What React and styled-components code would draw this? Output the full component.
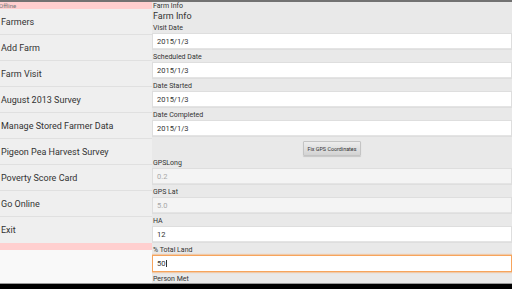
import React from "react";
import styled, { createGlobalStyle } from "styled-components";

const GlobalStyle = createGlobalStyle`
  html, body {
    margin: 0;
    padding: 0;
    background: #000;
  }
  body {
    font-family: Roboto, "Liberation Sans", sans-serif;
  }
`;

const Screen = styled.div`
  width: 512px;
  height: 289px;
  display: flex;
  flex-direction: column;
  overflow: hidden;
  background: #000;
`;

const StatusBar = styled.div`
  height: 2px;
  background: #727272;
`;

const Main = styled.div`
  height: 281px;
  display: flex;
`;

const NavBar = styled.div`
  height: 1px;
  background: #9a9a9a;
`;

const Sidebar = styled.div`
  width: 152px;
  display: flex;
  flex-direction: column;
  background: #f9f9f9;
`;

const Banner = styled.div`
  height: 7px;
  background: #ffcfcf;
  font-size: 6px;
  line-height: 7px;
  color: #777;
  text-indent: ${(p) => p.indent || 0}px;
  overflow: hidden;
  white-space: nowrap;
`;

const Menu = styled.ul`
  list-style: none;
  margin: 0;
  padding: 0;
  background: #efefef;
`;

const MenuItem = styled.li`
  height: 26px;
  box-sizing: border-box;
  display: flex;
  align-items: center;
  padding-left: 1px;
  font-size: 9px;
  color: #333;
  border-bottom: ${(p) => (p.last ? "none" : "1px solid #e0e0e0")};
  white-space: nowrap;
`;

const Form = styled.div`
  flex: 1;
  background: #e9e9e9;
  display: flex;
  flex-direction: column;
  overflow: hidden;
  color: #333;
`;

const SmallTitle = styled.div`
  height: 9px;
  font-size: 7px;
  line-height: 9px;
  padding-left: 1px;
`;

const Title = styled.div`
  height: 10px;
  font-size: 9px;
  line-height: 10px;
  padding-left: 1px;
`;

const Field = styled.div`
  margin-top: 3px;
  display: flex;
  flex-direction: column;
`;

const Label = styled.div`
  height: 9px;
  font-size: 7px;
  line-height: 9px;
  padding-left: 1px;
  white-space: nowrap;
`;

const Input = styled.div`
  height: 17px;
  box-sizing: border-box;
  display: flex;
  align-items: center;
  padding-left: 4px;
  font-size: 7.5px;
  background: ${(p) => (p.disabled ? "#f4f4f4" : "#fff")};
  color: ${(p) => (p.disabled ? "#a8a8a8" : "#333")};
  border: 1px solid ${(p) => (p.focused ? "#f7a45c" : "#dedede")};
  box-shadow: ${(p) =>
    p.focused ? "0 0 1px 1px rgba(247,164,92,0.45)" : "inset 0 -1px 0 #e4e4e4"};
`;

const Caret = styled.span`
  display: inline-block;
  width: 1px;
  height: 7px;
  background: #333;
  margin-left: 0.5px;
`;

const ButtonRow = styled.div`
  margin-top: 4px;
  display: flex;
  justify-content: center;
`;

const Button = styled.button`
  width: 58px;
  height: 15px;
  padding: 0;
  font-family: Roboto, "Liberation Sans", sans-serif;
  font-size: 5.4px;
  color: #333;
  border: 1px solid #c4c4c4;
  border-radius: 1px;
  background: linear-gradient(#ededed, #d3d3d3);
  box-shadow: 0 1px 1px rgba(0, 0, 0, 0.15);
  white-space: nowrap;
`;

const BlackBar = styled.div`
  flex: 1;
  background: #000;
`;

const menu = [
  "Farmers",
  "Add Farm",
  "Farm Visit",
  "August 2013 Survey",
  "Manage Stored Farmer Data",
  "Pigeon Pea Harvest Survey",
  "Poverty Score Card",
  "Go Online",
  "Exit",
];

const dates = ["Visit Date", "Scheduled Date", "Date Started", "Date Completed"];

const App = () => {
  return (
    <Screen>
      <GlobalStyle />
      <StatusBar />
      <Main>
        <Sidebar>
          <Banner indent={-1}>Offline</Banner>
          <Menu>
            {menu.map((m, i) => (
              <MenuItem key={m} last={i === menu.length - 1}>
                {m}
              </MenuItem>
            ))}
          </Menu>
          <Banner />
        </Sidebar>

        <Form>
          <SmallTitle>Farm Info</SmallTitle>
          <Title>Farm Info</Title>
          {dates.map((d) => (
            <Field key={d}>
              <Label>{d}</Label>
              <Input>2015/1/3</Input>
            </Field>
          ))}
          <ButtonRow>
            <Button>Fix GPS Coordinates</Button>
          </ButtonRow>
          <Field>
            <Label>GPSLong</Label>
            <Input disabled>0.2</Input>
          </Field>
          <Field>
            <Label>GPS Lat</Label>
            <Input disabled>5.0</Input>
          </Field>
          <Field>
            <Label>HA</Label>
            <Input>12</Input>
          </Field>
          <Field>
            <Label>% Total Land</Label>
            <Input focused>
              50
              <Caret />
            </Input>
          </Field>
          <Field>
            <Label>Person Met</Label>
          </Field>
        </Form>
      </Main>
      <NavBar />
      <BlackBar />
    </Screen>
  );
};

export default App;
